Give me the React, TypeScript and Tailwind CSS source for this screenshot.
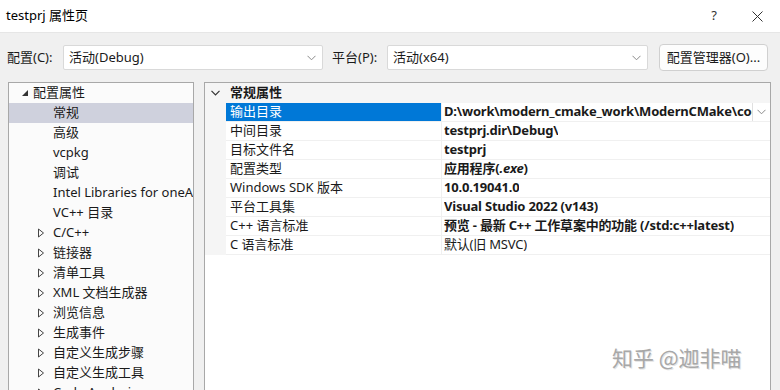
import React from "react";

const FONT = { fontFamily: '"Segoe UI", "Noto Sans", "Noto Sans CJK SC", sans-serif' };

function Chevron({ className = "" }: { className?: string }) {
  return (
    <svg width="9" height="6" viewBox="0 0 9 6" className={className}>
      <path d="M0.5 0.8 L4.5 4.8 L8.5 0.8" fill="none" stroke="#8a8a8a" strokeWidth="1" />
    </svg>
  );
}

function TriOpen() {
  return (
    <svg width="8" height="8" viewBox="0 0 8 8">
      <path d="M7 1 L7 7 L1 7 Z" fill="#333" />
    </svg>
  );
}

function TriClosed() {
  return (
    <svg width="8" height="10" viewBox="0 0 8 10">
      <path d="M1.5 1 L6.5 5 L1.5 9 Z" fill="none" stroke="#444" strokeWidth="1" />
    </svg>
  );
}

const children = ["常规", "高级", "vcpkg", "调试", "Intel Libraries for oneAPI", "VC++ 目录"];
const collapsed = [
  "C/C++",
  "链接器",
  "清单工具",
  "XML 文档生成器",
  "浏览信息",
  "生成事件",
  "自定义生成步骤",
  "自定义生成工具",
  "Code Analysis",
];

const props: [string, React.ReactNode][] = [
  ["输出目录", "D:\\work\\modern_cmake_work\\ModernCMake\\code\\chapter2"],
  ["中间目录", "testprj.dir\\Debug\\"],
  ["目标文件名", "testprj"],
  ["配置类型", <span>应用程序(<i>.exe</i>)</span>],
  ["Windows SDK 版本", "10.0.19041.0"],
  ["平台工具集", "Visual Studio 2022 (v143)"],
  ["C++ 语言标准", "预览 - 最新 C++ 工作草案中的功能 (/std:c++latest)"],
  ["C 语言标准", "默认(旧 MSVC)"],
];

export default function App() {
  return (
    <div className="w-[780px] h-[390px] overflow-hidden bg-[#f0f0f0] text-[13px] text-[#1a1a1a] flex flex-col" style={FONT}>
      {/* Title bar */}
      <div className="h-[33px] bg-white flex items-center shrink-0 border-b border-[#e6e6e6]">
        <div className="pl-[6px] text-[13px] text-black">testprj 属性页</div>
        <div className="ml-auto flex items-center">
          <div className="w-[40px] text-center text-[13px] text-[#333]">?</div>
          <div className="w-[46px] flex justify-center">
            <svg width="11" height="11" viewBox="0 0 11 11">
              <path d="M0.5 0.5 L10.5 10.5 M10.5 0.5 L0.5 10.5" stroke="#333" strokeWidth="1" />
            </svg>
          </div>
        </div>
      </div>

      {/* Toolbar */}
      <div className="h-[48px] flex items-center shrink-0 pt-[1px]">
        <div className="pl-[7px] w-[63px] shrink-0">配置(C):</div>
        <div className="w-[260px] shrink-0 h-[25px] bg-white border border-[#d9d9d9] rounded-[2px] flex items-center pl-[5px] pr-[6px]">
          <span>活动(Debug)</span>
          <Chevron className="ml-auto" />
        </div>
        <div className="pl-[9px] w-[64px] shrink-0">平台(P):</div>
        <div className="w-[261px] shrink-0 h-[25px] bg-white border border-[#d9d9d9] rounded-[2px] flex items-center pl-[5px] pr-[6px]">
          <span>活动(x64)</span>
          <Chevron className="ml-auto" />
        </div>
        <div className="ml-[11px] w-[109px] shrink-0 h-[27px] bg-[#fdfdfd] border border-[#d0d0d0] rounded-[4px] flex items-center justify-center">
          配置管理器(O)...
        </div>
      </div>

      {/* Panels */}
      <div className="flex flex-1 min-h-0 pt-[1px]">
        {/* Tree */}
        <div className="ml-[8px] w-[186px] shrink-0 bg-[#fbfbfb] border border-[#a8a8a8] border-b-0 overflow-hidden">
          <div className="h-[20px] flex items-center">
            <div className="w-[24px] flex justify-end pr-[4px]"><TriOpen /></div>
            <span>配置属性</span>
          </div>
          {children.map((c, i) => (
            <div key={c} className={`h-[20px] flex items-center pl-[44px] whitespace-nowrap ${i === 0 ? "bg-[#cfd1dd]" : ""}`}>
              {c}
            </div>
          ))}
          {collapsed.map((c) => (
            <div key={c} className="h-[20px] flex items-center whitespace-nowrap">
              <div className="w-[44px] shrink-0 flex justify-end pr-[8px]"><TriClosed /></div>
              <span>{c}</span>
            </div>
          ))}
        </div>

        {/* Property grid */}
        <div className="ml-[10px] w-[567px] shrink-0 bg-white border border-[#a8a8a8] border-b-0 relative overflow-hidden">
          <div className="flex">
            <div className="w-[21px] shrink-0 bg-[#f5f5f5] flex flex-col">
              <div className="h-[20px] flex items-center justify-center">
                <svg width="9" height="6" viewBox="0 0 9 6">
                  <path d="M0.5 0.8 L4.5 4.8 L8.5 0.8" fill="none" stroke="#333" strokeWidth="1.2" />
                </svg>
              </div>
              <div className="h-[152px]" />
            </div>
            <div className="flex-1 min-w-0">
              <div className="h-[20px] flex items-center pl-[4px] font-bold bg-[#f5f5f5]">常规属性</div>
              {props.map(([n, v], i) => (
                <div key={n} className="h-[19px] flex border-b border-[#f0f0f0]">
                  <div className={`w-[215px] shrink-0 pl-[4px] flex items-center whitespace-nowrap ${i === 0 ? "bg-[#0078d7] text-white" : ""}`}>{n}</div>
                  <div className={`flex-1 min-w-0 flex items-center pl-[2px] font-bold tracking-[-0.2px] whitespace-nowrap overflow-hidden ${i === 7 ? "font-normal" : ""} border-l border-[#f0f0f0]`}>
                    <span className="overflow-hidden">{v}</span>
                    {i === 0 && (
                      <div className="ml-auto shrink-0 w-[18px] h-[18px] bg-white border-l border-[#e0e0e0] flex items-center justify-center">
                        <Chevron />
                      </div>
                    )}
                  </div>
                </div>
              ))}
            </div>
          </div>
          <div
            className="absolute left-[407px] top-[259px] text-[21px] text-[#a8a8a8] whitespace-nowrap"
            style={{ textShadow: "1px 1px 0 #e4e4e4, -1px -1px 0 #ffffff", fontFamily: '"Noto Sans CJK SC", sans-serif' }}
          >
            知乎 @迦非喵
          </div>
        </div>
      </div>
    </div>
  );
}
